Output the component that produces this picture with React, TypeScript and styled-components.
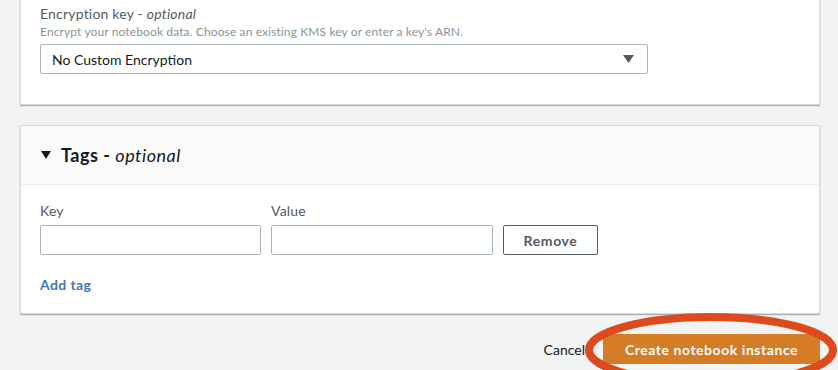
import React from "react";
import styled, { createGlobalStyle } from "styled-components";

const Global = createGlobalStyle`
  html, body { margin: 0; padding: 0; background: #f2f3f3; }
  body { font-family: Lato, "Open Sans", Arial, sans-serif; color: #16191f; }
  * { box-sizing: border-box; }
`;

const Page = styled.div`
  position: relative;
  width: 838px;
  height: 370px;
  overflow: hidden;
  padding: 0 18px 0 20px;
  display: flex;
  flex-direction: column;
  gap: 20px;
`;

const Panel = styled.section<{ $cut?: boolean }>`
  background: #fff;
  border: 1px solid #d5dbdb;
  border-top: ${(p) => (p.$cut ? "none" : "1px solid #d5dbdb")};
  box-shadow: 0 1px 1px 0 rgba(0, 28, 36, 0.3);
  display: flex;
  flex-direction: column;
`;

const PanelBody = styled.div<{ $pt: number; $pb: number }>`
  padding: ${(p) => p.$pt}px 19px ${(p) => p.$pb}px 19px;
  display: flex;
  flex-direction: column;
`;

const PanelHeader = styled.div`
  height: 59px;
  background: #fafafa;
  border-bottom: 1px solid #eaeded;
  display: flex;
  align-items: center;
  gap: 10px;
  padding: 0 20px;
`;

const HeaderTitle = styled.h2`
  margin: 0;
  font-size: 18px;
  line-height: 22px;
  font-weight: 700;
  letter-spacing: 0.5px;
  color: #16191f;
  em {
    font-weight: 400;
    font-style: italic;
  }
`;

const Label = styled.div`
  font-size: 14px;
  line-height: 20px;
  letter-spacing: 0.2px;
  color: #545b64;
  em { font-style: italic; }
`;

const Description = styled.div`
  font-size: 12px;
  line-height: 16px;
  letter-spacing: 0.12px;
  color: #879596;
`;

const Select = styled.div`
  margin-top: 4px;
  width: 608px;
  height: 30px;
  border: 1px solid #aab7b8;
  border-radius: 2px;
  display: flex;
  align-items: center;
  justify-content: space-between;
  padding: 0 13px 0 11px;
  font-size: 14px;
  color: #16191f;
`;

const FieldRow = styled.div`
  display: flex;
  gap: 10px;
`;

const Field = styled.div<{ $w: number }>`
  width: ${(p) => p.$w}px;
  display: flex;
  flex-direction: column;
  gap: 4px;
`;

const Input = styled.input`
  height: 30px;
  width: 100%;
  border: 1px solid #aab7b8;
  border-radius: 2px;
  background: #fff;
  font: inherit;
`;

const OutlineButton = styled.button`
  align-self: flex-end;
  width: 95px;
  height: 30px;
  border: 1px solid #545b64;
  border-radius: 2px;
  background: #fff;
  color: #545b64;
  font-family: inherit;
  font-size: 14px;
  font-weight: 700;
  letter-spacing: 0.6px;
`;

const LinkText = styled.a`
  margin-top: 20px;
  font-size: 14px;
  line-height: 20px;
  font-weight: 700;
  letter-spacing: 0.4px;
  color: #3f76bb;
  text-decoration: none;
`;

const Footer = styled.div`
  display: flex;
  justify-content: flex-end;
  align-items: center;
  gap: 18px;
`;

const TextButton = styled.span`
  font-size: 14px;
  color: #16191f;
`;

const PrimaryButton = styled.button`
  width: 217px;
  height: 30px;
  border: none;
  border-radius: 2px;
  background: #d57c27;
  color: #fff;
  font-family: inherit;
  font-size: 14px;
  font-weight: 700;
  letter-spacing: 0.55px;
`;

const Annotation = styled.svg`
  position: absolute;
  left: 0;
  top: 0;
  pointer-events: none;
`;

export default function App() {
  return (
    <>
      <Global />
      <Page>
        <Panel $cut>
          <PanelBody $pt={4} $pb={30}>
            <Label>
              Encryption key - <em>optional</em>
            </Label>
            <Description>
              Encrypt your notebook data. Choose an existing KMS key or enter a key's ARN.
            </Description>
            <Select>
              <span>No Custom Encryption</span>
              <svg width="11" height="8" viewBox="0 0 11 8">
                <polygon points="0,0 11,0 5.5,8" fill="#545b64" />
              </svg>
            </Select>
          </PanelBody>
        </Panel>

        <Panel>
          <PanelHeader>
            <svg width="10" height="8" viewBox="0 0 10 8">
              <polygon points="0,0 10,0 5,8" fill="#16191f" />
            </svg>
            <HeaderTitle>
              Tags - <em>optional</em>
            </HeaderTitle>
          </PanelHeader>
          <PanelBody $pt={16} $pb={18}>
            <FieldRow>
              <Field $w={221}>
                <Label>Key</Label>
                <Input />
              </Field>
              <Field $w={222}>
                <Label>Value</Label>
                <Input />
              </Field>
              <OutlineButton>Remove</OutlineButton>
            </FieldRow>
            <LinkText href="#">Add tag</LinkText>
          </PanelBody>
        </Panel>

        <Footer>
          <TextButton>Cancel</TextButton>
          <PrimaryButton>Create notebook instance</PrimaryButton>
        </Footer>

        <Annotation width="838" height="370" viewBox="0 0 838 370">
          <ellipse cx="711" cy="350" rx="122" ry="33" fill="none" stroke="#dd4a1d" strokeWidth="8" />
        </Annotation>
      </Page>
    </>
  );
}
